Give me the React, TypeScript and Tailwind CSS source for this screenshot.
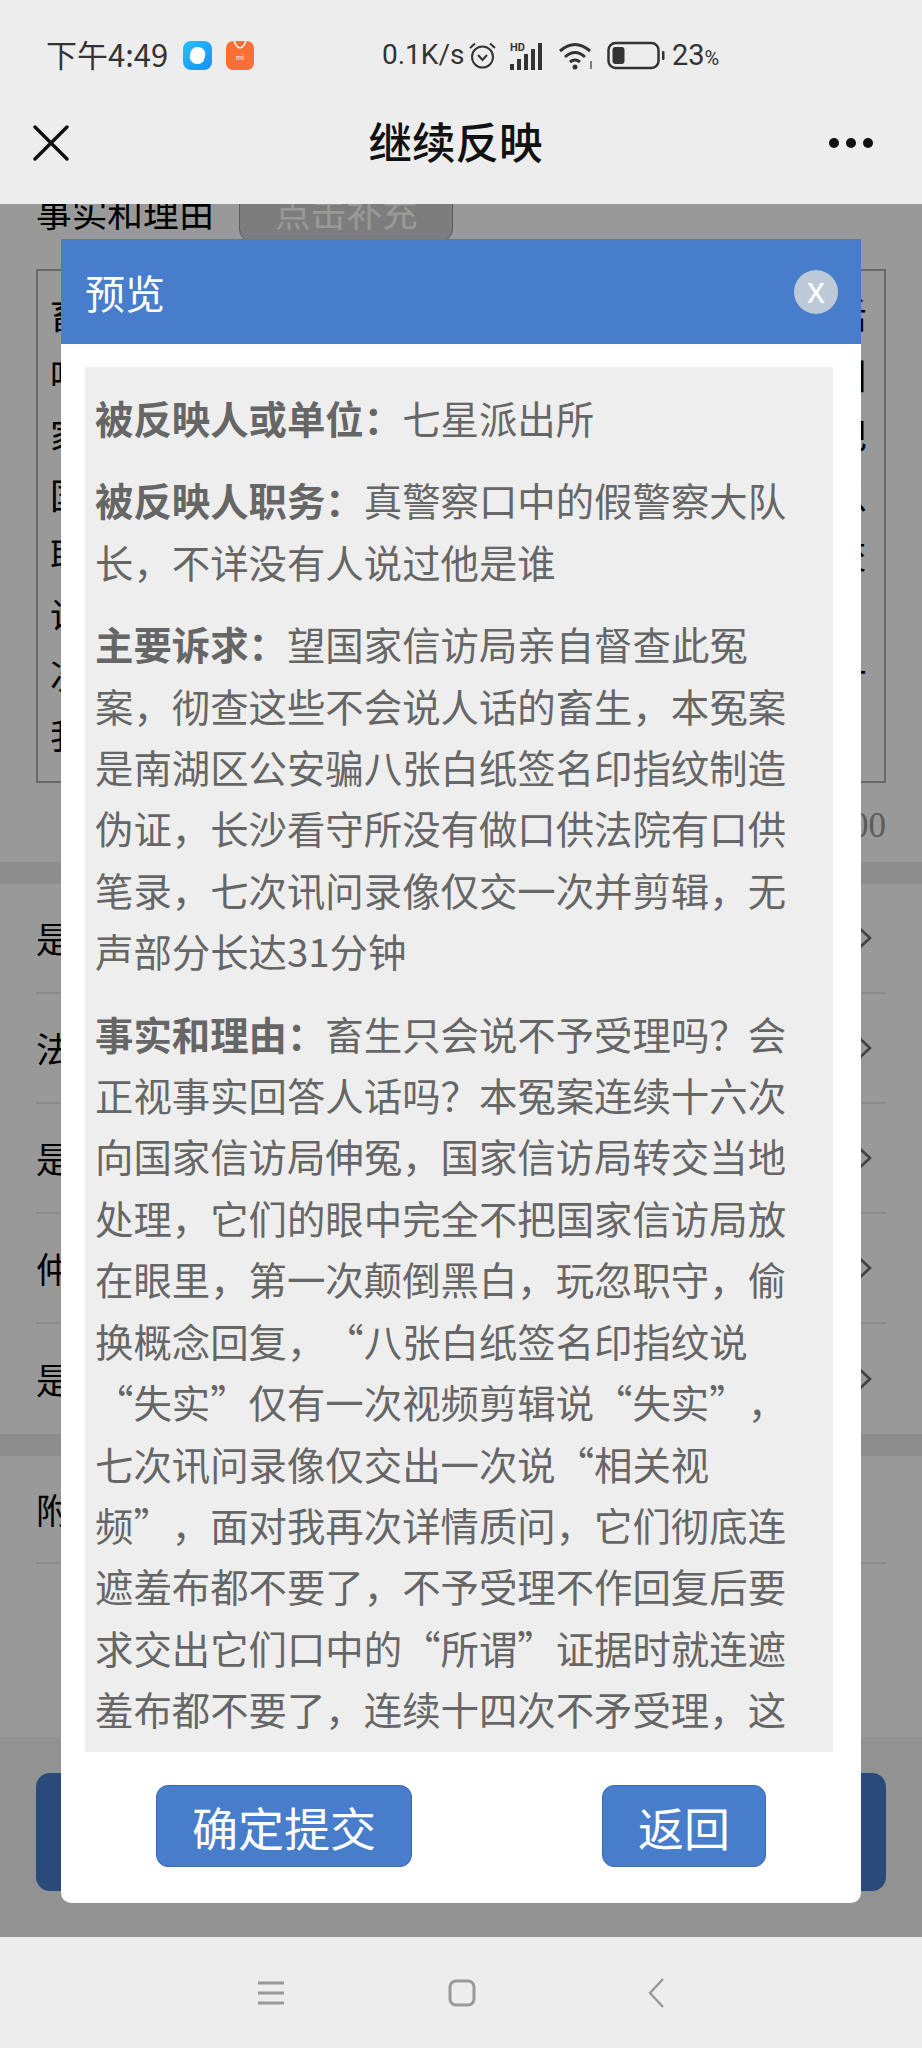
const BACK_LINES = [
  "畜生只会说不予受理吗？请问还会正视事实回答人话",
  "吗？本冤案已经连续十六次向国家信访局伸冤，向国",
  "家信访局转交当地部门处理，它们的眼中完全不会把",
  "国家信访局放在眼里，第一次颠倒黑白，玩忽职守以",
  "取巧地偷换概念回复，八张白纸签名印指纹未曾提交",
  "说失实，仅有一次视频剪辑说失实，本人再次上访",
  "次详细情况质问后它们彻底连遮羞布都不要了，总计",
  "我",
];

const SECTIONS = [
  { label: "被反映人或单位：", text: "七星派出所" },
  { label: "被反映人职务：", text: "真警察口中的假警察大队长，不详没有人说过他是谁" },
  {
    label: "主要诉求：",
    text: "望国家信访局亲自督查此冤案，彻查这些不会说人话的畜生，本冤案是南湖区公安骗八张白纸签名印指纹制造伪证，长沙看守所没有做口供法院有口供笔录，七次讯问录像仅交一次并剪辑，无声部分长达31分钟",
  },
  {
    label: "事实和理由：",
    text: "畜生只会说不予受理吗？会正视事实回答人话吗？本冤案连续十六次向国家信访局伸冤，国家信访局转交当地处理，它们的眼中完全不把国家信访局放在眼里，第一次颠倒黑白，玩忽职守，偷换概念回复，“八张白纸签名印指纹说“失实”仅有一次视频剪辑说“失实”，七次讯问录像仅交出一次说“相关视频”，面对我再次详情质问，它们彻底连遮羞布都不要了，不予受理不作回复后要求交出它们口中的“所谓”证据时就连遮羞布都不要了，连续十四次不矛受理，这些畜生",
  },
];

const ROWS = ["是", "法", "是", "仲", "是"];

function Chevron() {
  return (
    <svg width="18" height="28" viewBox="0 0 18 28" fill="none" stroke="#6e6e6e" strokeWidth="2.6">
      <polyline points="2,1 16,14 2,27" />
    </svg>
  );
}

function StatusIcons() {
  return (
    <div className="flex items-center text-[#333]">
      <span className="text-[28px] leading-none font-['Roboto',sans-serif] w-[78px]">0.1K/s</span>
      {/* 闹钟 */}
      <svg className="ml-[8px]" width="29" height="29" viewBox="0 0 29 29" fill="none" stroke="#333" strokeWidth="2">
        <circle cx="14.5" cy="16" r="10.5" />
        <polyline points="10,14 14.5,19 19,14" />
        <path d="M2 7 L7 2.5 M27 7 L22 2.5" />
      </svg>
      {/* HD信号 */}
      <svg className="ml-[13px]" width="35" height="29" viewBox="0 0 35 29" fill="#333">
        <text x="0" y="10" fontSize="11" fontWeight="700" fontFamily="Roboto, sans-serif">HD</text>
        <rect x="0" y="23" width="4" height="6" />
        <rect x="7" y="18" width="4" height="11" />
        <rect x="14" y="13" width="4" height="16" />
        <rect x="21" y="8" width="4" height="21" />
        <rect x="28" y="2" width="4" height="27" />
      </svg>
      {/* wifi */}
      <svg className="ml-[13px]" width="36" height="29" viewBox="0 0 36 29" fill="none" stroke="#333" strokeWidth="3">
        <path d="M2 10 Q17 -3 32 10" />
        <path d="M7 16 Q17 7 27 16" />
        <path d="M12 21 Q17 17 22 21" />
        <circle cx="17" cy="26" r="2.5" fill="#333" stroke="none" />
        <path d="M33 20 V28" strokeWidth="1.2" />
      </svg>
      {/* 电池 */}
      <svg className="ml-[13px]" width="58" height="29" viewBox="0 0 58 29" fill="none">
        <rect x="1.5" y="2" width="50" height="25" rx="7" stroke="#333" strokeWidth="2.5" />
        <rect x="5.5" y="6" width="12" height="17" rx="3" fill="#333" />
        <rect x="55" y="10" width="2.5" height="9" rx="1" fill="#333" />
      </svg>
      <span className="ml-[7px] text-[29px] leading-none font-['Roboto',sans-serif]">
        23<span className="text-[20px]">%</span>
      </span>
    </div>
  );
}

export default function App() {
  return (
    <div
      lang="zh-CN"
      className="h-[2048px] w-full overflow-hidden flex flex-col bg-white text-black font-['Noto_Sans_CJK_SC','Noto_Sans',sans-serif]"
    >
      {/* 状态栏 */}
      <div className="h-[110px] shrink-0 flex items-center pl-[46px] bg-[#ededed]">
        <div className="w-[336px] flex items-center">
          <span className="w-[121px] text-[31px] leading-none text-[#333] whitespace-nowrap pb-[4px]">下午4:49</span>
          <div className="ml-[16px] w-[29px] h-[29px] rounded-[8px] bg-gradient-to-br from-[#25c0fb] to-[#1a8ff5] flex items-center justify-center">
            <div className="w-[15px] h-[17px] rounded-[7px] bg-white rotate-12" />
          </div>
          <div className="ml-[14px] w-[28px] h-[29px] rounded-[7px] bg-[#fb6f35] flex flex-col items-center">
            <svg width="16" height="10" viewBox="0 0 16 10" fill="none" stroke="white" strokeWidth="1.6">
              <path d="M2 0 Q8 14 14 0" />
            </svg>
            <span className="mt-[3px] text-[7px] leading-none text-white">mi</span>
          </div>
        </div>
        <StatusIcons />
      </div>

      {/* 标题栏 */}
      <div className="h-[94px] shrink-0 pb-[28px] bg-[#ededed] flex items-center justify-between pl-[33px] pr-[49px] relative">
        <svg width="36" height="36" viewBox="0 0 36 36" stroke="#111" strokeWidth="3.4" strokeLinecap="round">
          <path d="M2 2 L34 34 M34 2 L2 34" />
        </svg>
        <span className="text-[43.5px] leading-none font-medium text-[#111] ml-[13px] pb-[5px]">继续反映</span>
        <div className="flex gap-[7px]">
          <span className="w-[10px] h-[10px] rounded-full bg-[#111]" />
          <span className="w-[10px] h-[10px] rounded-full bg-[#111]" />
          <span className="w-[10px] h-[10px] rounded-full bg-[#111]" />
        </div>
      </div>

      {/* 内容区 */}
      <div className="flex-1 relative overflow-hidden">
        <div className="h-full flex flex-col">
          <div className="pl-[36px] -mt-[26px] h-[64px] flex items-center shrink-0 text-[35.7px]">
            <span className="leading-none pt-[4px]">事实和理由</span>
            <div className="ml-[25px] w-[214px] h-[64px] rounded-[13px] border border-[#999] bg-[#d0d0d0] flex items-center justify-center text-white leading-none pt-[4px]">
              点击补充
            </div>
          </div>

          <div className="mx-[36px] mt-[27px] h-[514px] shrink-0 border-2 border-[#b0b0b0] pl-[12px] pt-[13px] overflow-hidden text-[35.5px] leading-[60px] whitespace-pre">
            {BACK_LINES.map((l, i) => (
              <div key={i}>{l}</div>
            ))}
          </div>

          <div className="mx-[36px] h-[79px] shrink-0 flex items-center justify-end pt-[6px] text-[35px] leading-none text-[#999] font-['Liberation_Serif',serif]">
            500/2000
          </div>

          <div className="h-[22px] shrink-0 bg-[#ebebeb]" />
          <div className="px-[36px] shrink-0">
            {ROWS.map((r, i) => (
              <div
                key={i}
                className={`h-[110px] flex items-center justify-between pr-[14px] text-[35px] ${
                  i < ROWS.length - 1 ? "border-b-2 border-[#e8e8e8]" : ""
                }`}
              >
                <span>{r}</span>
                <Chevron />
              </div>
            ))}
          </div>
          <div className="h-[22px] shrink-0 bg-[#ebebeb]" />
          <div className="px-[36px] shrink-0">
            <div className="h-[108px] flex items-center border-b-2 border-[#e8e8e8] text-[35px]">附</div>
          </div>
          <div className="flex-1" />

          <div className="h-[200px] shrink-0 bg-[#f4f4f4] px-[36px] pt-[36px]">
            <div className="w-full h-[118px] rounded-[14px] bg-[#477dcb]" />
          </div>
        </div>

        {/* 遮罩 */}
        <div className="absolute inset-0 bg-black/40" />

        {/* 预览弹窗 */}
        <div className="absolute left-[61px] top-[35px] w-[800px] h-[1664px] bg-white rounded-b-[10px] flex flex-col overflow-hidden">
          <div className="h-[105px] shrink-0 bg-[#477dcb] flex items-center justify-between pl-[24px] pr-[23px]">
            <span className="text-[40px] leading-none text-white">预览</span>
            <div className="w-[44px] h-[44px] rounded-full bg-[#bccad8] flex items-center justify-center text-[36px] leading-none text-white pb-[2px] font-['Liberation_Sans',sans-serif]">
              x
            </div>
          </div>
          <div className="ml-[24px] mr-[28px] mt-[23px] h-[1385px] shrink-0 overflow-hidden bg-[#eeeeee] pl-[10px] pr-[33px] pt-[20px] text-[38.4px] leading-[61.4px] text-[#666] [text-spacing-trim:space-all]">
            {SECTIONS.map((s) => (
              <p key={s.label} className="mb-[21px]">
                <b className="font-bold">{s.label}</b>
                {s.text}
              </p>
            ))}
          </div>
          <div className="flex-1 flex justify-around pt-[33px]">
            <div className="w-[256px] h-[82px] rounded-[12px] bg-[#477dcb] border border-[#3a6aae] flex items-center justify-center text-[46px] leading-none text-white">
              确定提交
            </div>
            <div className="w-[164px] h-[82px] rounded-[12px] bg-[#477dcb] border border-[#3a6aae] flex items-center justify-center text-[46px] leading-none text-white">
              返回
            </div>
          </div>
        </div>
      </div>

      {/* 底部导航 */}
      <div className="h-[111px] shrink-0 bg-[#ededed] flex items-center pl-[258px]">
        <svg width="26" height="24" viewBox="0 0 26 24" stroke="#999" strokeWidth="3">
          <path d="M0 2 H26 M0 12 H26 M0 22 H26" />
        </svg>
        <svg className="ml-[164px]" width="28" height="28" viewBox="0 0 28 28" fill="none" stroke="#999" strokeWidth="3">
          <rect x="2" y="2" width="24" height="24" rx="6" />
        </svg>
        <svg className="ml-[172px]" width="17" height="30" viewBox="0 0 17 30" fill="none" stroke="#999" strokeWidth="2.4">
          <polyline points="15,1 2,15 15,29" />
        </svg>
      </div>
    </div>
  );
}
